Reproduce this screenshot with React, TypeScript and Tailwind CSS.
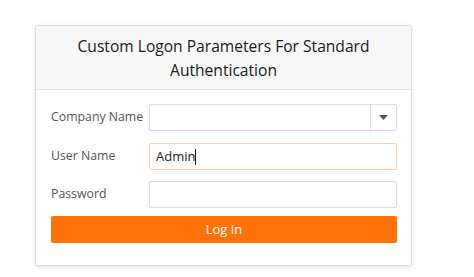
export default function App() {
  return (
    <main className="min-h-screen w-[474px] h-[277px] bg-white pt-[25px] pl-[35px]" style={{ fontFamily: '"Open Sans", "Noto Sans", sans-serif' }}>
      <div className="w-[377px] border border-[#dedede] rounded-[3px] shadow-[0_1px_4px_rgba(0,0,0,0.12)] bg-white">
        <div className="h-[64px] bg-[#f7f7f7] border-b border-[#e3e3e3] flex items-center justify-center text-center px-4">
          <h1 className="text-[15.6px] leading-[24px] text-[#1a1a1a]">
            Custom Logon Parameters For Standard
            <br />
            Authentication
          </h1>
        </div>
        <div className="pt-[14px] pb-[22px] pl-[15px] pr-[14px] flex flex-col">
          <div className="flex items-center h-[27px]">
            <label className="w-[98px] text-[12.3px] text-[#555]">Company Name</label>
            <div className="flex-1 h-[27px] flex border border-[#dcdcdc] rounded-[2px]">
              <div className="flex-1" />
              <div className="w-[26px] border-l border-[#e3e3e3] flex items-center justify-center">
                <svg width="9" height="5" viewBox="0 0 9 5">
                  <path d="M0 0h9L4.5 5z" fill="#555" />
                </svg>
              </div>
            </div>
          </div>
          <div className="flex items-center h-[27px] mt-[12px]">
            <label className="w-[98px] text-[12.3px] text-[#555]">User Name</label>
            <div className="flex-1 h-[27px] flex items-center border border-[#f4cfb0] rounded-[2px] px-[6px] text-[13px] text-[#222]">
              Admin<span className="w-px h-[16px] bg-[#111]" />
            </div>
          </div>
          <div className="flex items-center h-[27px] mt-[11px]">
            <label className="w-[98px] text-[12.3px] text-[#555]">Password</label>
            <div className="flex-1 h-[27px] border border-[#dcdcdc] rounded-[2px]" />
          </div>
          <button className="mt-[8px] h-[27px] w-full bg-[#ff7208] rounded-[2px] text-white text-[13px]">Log In</button>
        </div>
      </div>
    </main>
  );
}
